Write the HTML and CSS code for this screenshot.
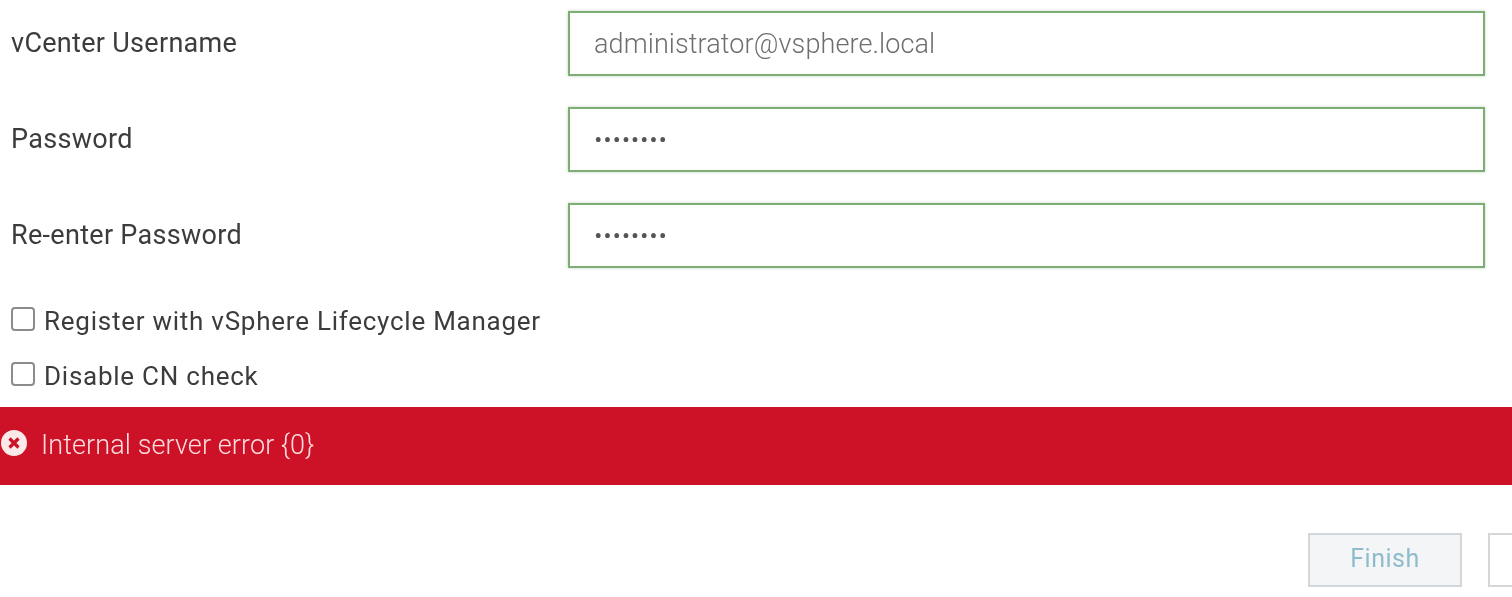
FILE: index.html
```html
<!DOCTYPE html>
<html lang="en">
<head>
<meta charset="UTF-8">
<meta name="viewport" content="width=device-width, initial-scale=1.0">
<title>Register vCenter</title>
<link rel="stylesheet" href="styles.css">
</head>
<body>
<div class="page">
    <form class="fields">
        <div class="field-row">
            <label class="field-label" for="username">vCenter Username</label>
            <input class="field-input" type="text" id="username" value="administrator@vsphere.local">
        </div>
        <div class="field-row">
            <label class="field-label" for="password">Password</label>
            <input class="field-input field-secret" type="password" id="password" value="password">
        </div>
        <div class="field-row">
            <label class="field-label" for="password2">Re-enter Password</label>
            <input class="field-input field-secret" type="password" id="password2" value="password">
        </div>
        <label class="check-row check-first"><span class="check-box"></span>Register with vSphere Lifecycle Manager</label>
        <label class="check-row"><span class="check-box"></span>Disable CN check</label>
    </form>
    <div class="error-banner">
        <svg class="error-icon" viewBox="0 0 28 28" width="28" height="28">
            <circle cx="14" cy="14" r="13" fill="#fbe9ea"/>
            <path d="M9.5 9.5 18.5 18.5M18.5 9.5 9.5 18.5" stroke="#cd1126" stroke-width="3.2" fill="none"/>
        </svg>
        <span>Internal server error {0}</span>
    </div>
    <div class="actions">
        <button class="btn" type="button">Finish</button>
        <button class="btn btn-plain" type="button"></button>
    </div>
</div>
</body>
</html>
```

FILE: styles.css
```css
html, body {
    margin: 0;
    padding: 0;
    height: 100%;
    overflow: hidden;
    background-color: #fff;
}
.page {
    height: 597px;
    overflow: hidden;
    font-family: Roboto, "Liberation Sans", sans-serif;
    color: #3c3c3c;
    filter: blur(0.7px);
}
.fields {
    padding: 11px 27px 0 11px;
}
.field-row {
    display: flex;
    align-items: center;
    height: 65px;
    margin-bottom: 31px;
}
.field-label {
    width: 557px;
    padding-bottom: 2px;
    font-size: 27px;
    letter-spacing: 0.3px;
}
.field-input {
    flex: 1;
    box-sizing: border-box;
    height: 65px;
    padding: 0 24px;
    border: 2px solid #7fae75;
    border-radius: 0;
    outline: none;
    background-color: #fff;
    box-shadow: 0 0 3px rgba(127, 174, 117, 0.5);
    font-family: inherit;
    font-size: 27px;
    font-weight: 300;
    letter-spacing: 0.1px;
    color: #6e6e6e;
}
.field-secret {
    font-size: 26px;
    letter-spacing: 0.8px;
    color: #555;
}
.check-row {
    display: flex;
    align-items: center;
    gap: 9px;
    height: 55px;
    font-size: 26px;
    letter-spacing: 0.75px;
}
.check-first {
    margin-top: -6px;
}
.check-box {
    box-sizing: border-box;
    width: 24px;
    height: 24px;
    margin-top: -3px;
    border: 2px solid #8c8c8c;
    border-radius: 4px;
    background-color: #fff;
}
.error-banner {
    display: flex;
    align-items: center;
    gap: 13px;
    box-sizing: border-box;
    height: 78px;
    margin-top: 4px;
    padding: 0 0 3px 0;
    background-color: #cd1126;
    font-size: 27px;
    font-weight: 300;
    letter-spacing: 0.1px;
    color: #fbdde0;
}
.error-icon {
    margin-bottom: 4px;
}
.actions {
    display: flex;
    gap: 26px;
    padding: 48px 0 0 1308px;
    width: 1000px;
}
.btn {
    flex: none;
    box-sizing: border-box;
    width: 154px;
    height: 54px;
    padding-bottom: 4px;
    border: 2px solid #d4d7d9;
    border-radius: 0;
    background-color: #f3f5f6;
    font-family: inherit;
    font-size: 25px;
    letter-spacing: 0.5px;
    color: #8fbccb;
}
.btn-plain {
    background-color: #fff;
}
```
